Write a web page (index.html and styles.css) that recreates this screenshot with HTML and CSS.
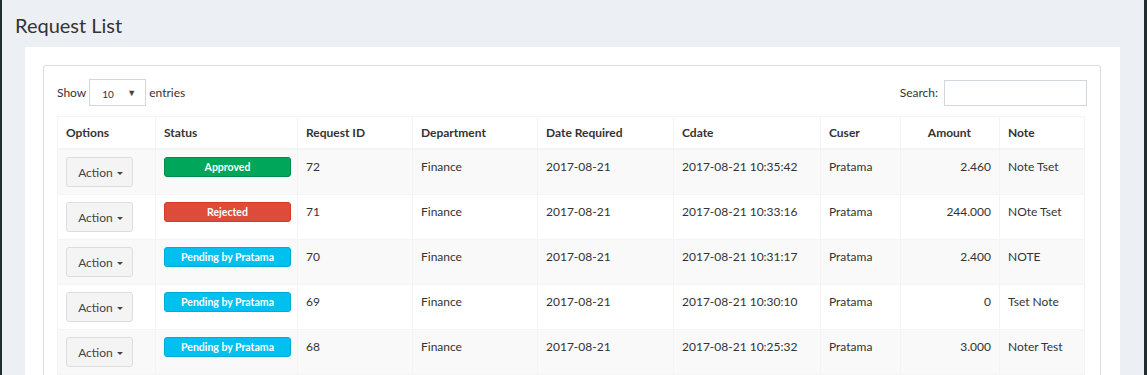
FILE: index.html
```html
<!DOCTYPE html>
<html lang="en">
<head>
  <meta charset="UTF-8" />
  <title>Request List</title>
  <link rel="stylesheet" href="styles.css">
</head>
<body>
  <div class="content-header">
    <h1>Request List</h1>
  </div>

  <div class="box">
    <div class="panel">
      <div class="controls">
        <div class="length">
          Show
          <div class="select"><span>10</span><span class="arrow">&#9660;</span></div>
          entries
        </div>
        <div class="search">
          Search:
          <div class="input"></div>
        </div>
      </div>

      <table class="list">
        <colgroup>
          <col style="width:98px">
          <col style="width:142px">
          <col style="width:115px">
          <col style="width:125px">
          <col style="width:136px">
          <col style="width:147px">
          <col style="width:80px">
          <col style="width:99px">
          <col style="width:85px">
        </colgroup>
        <thead>
          <tr>
            <th>Options</th>
            <th>Status</th>
            <th>Request ID</th>
            <th>Department</th>
            <th>Date Required</th>
            <th>Cdate</th>
            <th>Cuser</th>
            <th class="num">Amount</th>
            <th>Note</th>
          </tr>
        </thead>
        <tbody>
          <tr>
            <td><button class="action">Action <span class="caret"></span></button></td>
            <td><span class="label approved">Approved</span></td>
            <td>72</td>
            <td>Finance</td>
            <td>2017-08-21</td>
            <td>2017-08-21 10:35:42</td>
            <td>Pratama</td>
            <td class="num">2.460</td>
            <td>Note Tset</td>
          </tr>
          <tr>
            <td><button class="action">Action <span class="caret"></span></button></td>
            <td><span class="label rejected">Rejected</span></td>
            <td>71</td>
            <td>Finance</td>
            <td>2017-08-21</td>
            <td>2017-08-21 10:33:16</td>
            <td>Pratama</td>
            <td class="num">244.000</td>
            <td>NOte Tset</td>
          </tr>
          <tr>
            <td><button class="action">Action <span class="caret"></span></button></td>
            <td><span class="label pending">Pending by Pratama</span></td>
            <td>70</td>
            <td>Finance</td>
            <td>2017-08-21</td>
            <td>2017-08-21 10:31:17</td>
            <td>Pratama</td>
            <td class="num">2.400</td>
            <td>NOTE</td>
          </tr>
          <tr>
            <td><button class="action">Action <span class="caret"></span></button></td>
            <td><span class="label pending">Pending by Pratama</span></td>
            <td>69</td>
            <td>Finance</td>
            <td>2017-08-21</td>
            <td>2017-08-21 10:30:10</td>
            <td>Pratama</td>
            <td class="num">0</td>
            <td>Tset Note</td>
          </tr>
          <tr>
            <td><button class="action">Action <span class="caret"></span></button></td>
            <td><span class="label pending">Pending by Pratama</span></td>
            <td>68</td>
            <td>Finance</td>
            <td>2017-08-21</td>
            <td>2017-08-21 10:25:32</td>
            <td>Pratama</td>
            <td class="num">3.000</td>
            <td>Noter Test</td>
          </tr>
        </tbody>
      </table>
    </div>
  </div>
</body>
</html>
```

FILE: styles.css
```css
html, body {
  height: 100%;
}

body {
  font-family: Lato, "Liberation Sans", sans-serif;
  font-size: 12px;
  color: #333;
  margin: 0;
  background-color: #ecf0f5;
  border-left: 2px solid #222d32;
  border-right: 3px solid #222d32;
  box-sizing: border-box;
  overflow: hidden;
}

.content-header {
  padding: 12px 0 0 13px;
}

.content-header h1 {
  margin: 0;
  font-size: 20px;
  font-weight: 400;
  line-height: 26px;
  color: #333;
}

.box {
  background-color: #fff;
  margin: 9px 24px 0 23px;
  padding: 18px 19px 0 18px;
  height: 400px;
}

.panel {
  border: 1px solid #dcdcdc;
  border-radius: 3px;
  padding: 13px 13px 0 13px;
  height: 400px;
}

.controls {
  display: flex;
  justify-content: space-between;
  align-items: center;
  height: 27px;
  margin-bottom: 10px;
}

.length,
.search {
  display: flex;
  align-items: center;
  gap: 3px;
}

.select {
  width: 57px;
  height: 27px;
  box-sizing: border-box;
  border: 1px solid #d2d6de;
  display: flex;
  align-items: center;
  justify-content: space-between;
  padding: 2px 9px 0 12px;
  font-size: 10px;
}

.select .arrow {
  font-size: 9px;
  margin-top: -3px;
  color: #444;
}

.search .input {
  width: 143px;
  height: 26px;
  box-sizing: border-box;
  border: 1px solid #d2d6de;
  margin-left: 3px;
}

.list {
  width: 1027px;
  border-collapse: collapse;
  table-layout: fixed;
}

.list th,
.list td {
  border: 1px solid #f4f4f4;
  text-align: left;
  vertical-align: top;
  line-height: 17px;
  white-space: nowrap;
}

.list th {
  font-weight: 700;
  padding: 7px 8px;
  border-bottom-width: 2px;
}

.list td {
  padding: 8px 8px 7px 8px;
}

.list th.num {
  text-align: right;
  padding-right: 28px;
}

.list td.num {
  text-align: right;
}

.list tbody tr:nth-child(odd) {
  background-color: #f9f9f9;
}

.action {
  font-family: inherit;
  font-size: 12px;
  color: #444;
  background-color: #f4f4f4;
  border: 1px solid #ddd;
  border-radius: 3px;
  width: 67px;
  height: 30px;
  padding: 0 0 0 2px;
  margin: -1px 0 0 0;
}

.caret {
  display: inline-block;
  width: 0;
  height: 0;
  border-top: 3px solid #444;
  border-left: 3px solid transparent;
  border-right: 3px solid transparent;
  vertical-align: middle;
  margin-left: 1px;
}

.label {
  display: block;
  width: 127px;
  height: 20px;
  box-sizing: border-box;
  margin-top: -1px;
  border-radius: 3px;
  color: #fff;
  font-size: 10.5px;
  font-weight: 700;
  text-align: center;
  line-height: 18px;
}

.approved {
  background-color: #00a65a;
  border: 1px solid #008d4c;
}

.rejected {
  background-color: #dd4b39;
  border: 1px solid #d73925;
}

.pending {
  background-color: #00c0ef;
  border: 1px solid #00acd6;
}
```
